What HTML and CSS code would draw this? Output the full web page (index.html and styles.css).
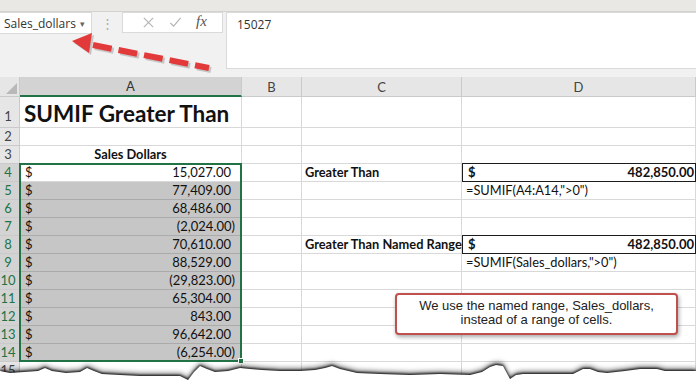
FILE: index.html
```html
<!DOCTYPE html>
<html>
<head>
  <link rel="stylesheet" href="styles.css">
</head>
<body>
  <!-- Ribbon edge and formula bar -->
  <div class="ribbon-edge"></div>
  <div class="formula-bar">
    <div class="name-box"><span>Sales_dollars</span><span class="caret">&#9662;</span></div>
    <div class="grip">&#8942;</div>
    <div class="fx-buttons">
      <svg class="fx-icon" viewBox="0 0 14 14"><path d="M2 2l10 10M12 2L2 12"/></svg>
      <svg class="fx-icon" viewBox="0 0 14 14"><path d="M1.5 7.5l3.5 3.5 7.5-9"/></svg>
      <span class="fx">fx</span>
    </div>
    <div class="formula-input">15027</div>
  </div>

  <!-- Worksheet grid -->
  <div class="sheet">
    <div class="corner"><span class="corner-tri"></span></div>
    <div class="col-head selected">A</div>
    <div class="col-head">B</div>
    <div class="col-head">C</div>
    <div class="col-head">D</div>

    <div class="row-head tall">1</div>
    <div class="cell title">SUMIF Greater Than</div>
    <div class="cell"></div><div class="cell"></div><div class="cell"></div>

    <div class="row-head">2</div>
    <div class="cell"></div><div class="cell"></div><div class="cell"></div><div class="cell"></div>

    <div class="row-head">3</div>
    <div class="cell bold center">Sales Dollars</div>
    <div class="cell"></div><div class="cell"></div><div class="cell"></div>

    <div class="row-head sel">4</div>
    <div class="cell money active"><span>$</span><span class="pos">15,027.00</span></div>
    <div class="cell"></div>
    <div class="cell bold">Greater Than</div>
    <div class="cell money boxed bold"><span>$</span><span class="total">482,850.00</span></div>

    <div class="row-head sel">5</div>
    <div class="cell money in-sel"><span>$</span><span class="pos">77,409.00</span></div>
    <div class="cell"></div><div class="cell"></div>
    <div class="cell formula">=SUMIF(A4:A14,"&gt;0")</div>

    <div class="row-head sel">6</div>
    <div class="cell money in-sel"><span>$</span><span class="pos">68,486.00</span></div>
    <div class="cell"></div><div class="cell"></div><div class="cell"></div>

    <div class="row-head sel">7</div>
    <div class="cell money in-sel"><span>$</span><span class="neg">(2,024.00)</span></div>
    <div class="cell"></div><div class="cell"></div><div class="cell"></div>

    <div class="row-head sel">8</div>
    <div class="cell money in-sel"><span>$</span><span class="pos">70,610.00</span></div>
    <div class="cell"></div>
    <div class="cell bold">Greater Than Named Range</div>
    <div class="cell money boxed bold"><span>$</span><span class="total">482,850.00</span></div>

    <div class="row-head sel">9</div>
    <div class="cell money in-sel"><span>$</span><span class="pos">88,529.00</span></div>
    <div class="cell"></div><div class="cell"></div>
    <div class="cell formula">=SUMIF(Sales_dollars,"&gt;0")</div>

    <div class="row-head sel">10</div>
    <div class="cell money in-sel"><span>$</span><span class="neg">(29,823.00)</span></div>
    <div class="cell"></div><div class="cell"></div><div class="cell"></div>

    <div class="row-head sel">11</div>
    <div class="cell money in-sel"><span>$</span><span class="pos">65,304.00</span></div>
    <div class="cell"></div><div class="cell"></div><div class="cell"></div>

    <div class="row-head sel">12</div>
    <div class="cell money in-sel"><span>$</span><span class="pos">843.00</span></div>
    <div class="cell"></div><div class="cell"></div><div class="cell"></div>

    <div class="row-head sel">13</div>
    <div class="cell money in-sel"><span>$</span><span class="pos">96,642.00</span></div>
    <div class="cell"></div><div class="cell"></div><div class="cell"></div>

    <div class="row-head sel">14</div>
    <div class="cell money in-sel"><span>$</span><span class="neg">(6,254.00)</span></div>
    <div class="cell"></div><div class="cell"></div><div class="cell"></div>

    <div class="row-head">15</div>
    <div class="cell"></div><div class="cell"></div><div class="cell"></div><div class="cell"></div>

    <!-- Selection outline over A4:A14 -->
    <div class="selection"><span class="handle"></span></div>
  </div>

  <!-- Overlays: arrow, callout, torn edge -->
  <svg class="arrow" viewBox="0 0 240 90" width="240" height="90">
    <g class="arrow-shadow">
      <path class="dash" d="M95 47 L211 70"/>
      <path class="head" d="M74 43 L94 35 L91 55 Z"/>
    </g>
    <path class="dash" d="M93 45 L209 68"/>
    <path class="head" d="M72 41 L92 33 L89 53 Z"/>
  </svg>

  <div class="callout">We use the named range, Sales_dollars,<br>instead of a range of cells.</div>

  <svg class="torn" viewBox="0 0 696 30" width="696" height="30" preserveAspectRatio="none">
    <path d="M0 9 L10 11 L24 10 L38 9 L45 6 L52 9 L66 11 L80 10 L87 6 L94 9 L102 12 L120 13 L140 14 L160 14 L180 14 L188 18 L194 10 L200 4 L207 7 L215 10 L228 9 L240 6 L250 7 L262 8 L280 9 L300 9 L315 8 L325 6 L332 4 L340 7 L357 11 L380 12 L410 13 L440 12 L470 13 L482 10 L490 5 L496 3 L503 4 L510 17 L516 13 L523 12 L545 12 L573 12 L583 7 L590 7 L598 10 L607 11 L625 9 L640 7 L657 7 L665 9 L673 9 L696 9 L696 30 L0 30 Z"/>
  </svg>
</body>
</html>
```

FILE: styles.css
```css
* { box-sizing: border-box; }
html, body {
  width: 696px;
  height: 392px;
  overflow: hidden;
}
body {
  margin: 0;
  position: relative;
  background: #f1f1f1;
  font-family: Lato, "Liberation Sans", sans-serif;
  color: #111;
}

/* Top strip of the ribbon */
.ribbon-edge {
  height: 12px;
  background: #e9e8e4;
  border-bottom: 1px solid #d2d2d0;
}

/* Formula bar */
.formula-bar {
  display: flex;
  align-items: flex-start;
  height: 65px; /* 12px -> 77px */
}
.name-box {
  width: 92px;
  height: 22px;
  background: #fff;
  border: 1px solid #dadada;
  border-left: none;
  display: flex;
  align-items: center;
  justify-content: space-between;
  padding: 0 6px 0 4px;
  font-family: "Open Sans", sans-serif;
  font-size: 12px;
  color: #333;
}
.caret {
  font-size: 9px;
  color: #666;
}
.grip {
  width: 30px;
  height: 22px;
  display: flex;
  align-items: center;
  justify-content: center;
  color: #aaa;
  font-size: 13px;
}
.fx-buttons {
  width: 101px;
  height: 21px;
  background: #fff;
  border: 1px solid #dadada;
  display: flex;
  align-items: center;
  justify-content: space-around;
  padding: 0 8px 0 12px;
}
.fx-icon {
  width: 13px;
  height: 13px;
  fill: none;
  stroke: #b5b5b5;
  stroke-width: 1.3;
}
.fx {
  font-family: "Liberation Serif", serif;
  font-style: italic;
  font-size: 15px;
  color: #555;
  margin-top: -2px;
}
.formula-input {
  flex: 1;
  margin-left: 3px;
  height: 57px;
  background: #fff;
  border: 1px solid #dadada;
  border-right: none;
  padding: 3px 10px;
  font-family: "Open Sans", sans-serif;
  font-size: 12px;
  color: #333;
}

/* Worksheet */
.sheet {
  position: relative;
  display: grid;
  grid-template-columns: 20px 222px 60px 160px 234px;
  grid-template-rows: 20px 31px repeat(14, 18px);
  background: #fff;
  font-size: 12.8px;
}
.corner,
.col-head,
.row-head {
  background: #e6e6e6;
  color: #444;
  border-right: 1px solid #cacaca;
  border-bottom: 1px solid #cacaca;
}
.corner {
  position: relative;
}
.corner-tri {
  position: absolute;
  right: 2px;
  bottom: 2px;
  width: 0;
  height: 0;
  border-left: 11px solid transparent;
  border-bottom: 11px solid #b8b8b8;
}
.col-head {
  display: flex;
  align-items: center;
  justify-content: center;
  font-size: 13px;
}
.col-head.selected {
  background: #d3d3d3;
  border-bottom: 2px solid #217346;
  color: #333;
}
.row-head {
  display: flex;
  align-items: flex-end;
  justify-content: center;
  padding: 0 3px 1px 0;
  font-size: 13px;
}
.row-head.tall {
  padding-bottom: 3px;
}
.row-head.sel {
  background: #d3d3d3;
  color: #217346;
}
.cell {
  border-right: 1px solid #d9d9d9;
  border-bottom: 1px solid #d9d9d9;
  display: flex;
  align-items: flex-end;
  padding: 0 3px 1px;
  white-space: nowrap;
  overflow: visible;
}
.title {
  font-size: 22.5px;
  font-weight: bold;
  padding-left: 4px;
  padding-bottom: 0;
}
.bold { font-weight: bold; }
.center { justify-content: center; }
.money {
  justify-content: space-between;
  padding-left: 5px;
  font-size: 13px;
}
.money .pos { padding-right: 7px; }
.money .neg { padding-right: 3px; }
.money .total { padding-right: 0; margin-right: -2px; }
.in-sel {
  background: #c6c6c6;
  border-bottom-color: #ababab;
}
.active {
  background: #fff;
}
.boxed {
  border: 1px solid #1c1c1c;
  margin-top: -1px;
  padding-left: 5px;
}
.formula {
  padding-left: 4px;
}
.selection {
  position: absolute;
  grid-column: 2 / 3;
  grid-row: 5 / 16;
  top: -1px;
  left: -1px;
  right: 0;
  bottom: 0;
  border: 2px solid #217346;
  pointer-events: none;
}
.handle {
  position: absolute;
  right: -4px;
  bottom: -4px;
  width: 6px;
  height: 6px;
  background: #217346;
  border: 1px solid #fff;
}

/* Red dashed arrow pointing at the name box */
.arrow {
  position: absolute;
  left: 0;
  top: 0;
}
.arrow .dash {
  fill: none;
  stroke: #e23a3a;
  stroke-width: 6;
  stroke-dasharray: 19 7;
}
.arrow .head {
  fill: #e23a3a;
}
.arrow-shadow .dash { stroke: rgba(0, 0, 0, 0.18); }
.arrow-shadow .head { fill: rgba(0, 0, 0, 0.18); }

/* Callout box */
.callout {
  position: absolute;
  left: 395px;
  top: 293px;
  width: 283px;
  height: 42px;
  background: #fff;
  border: 2px solid #c0504d;
  border-radius: 4px;
  box-shadow: 1px 2px 4px rgba(0, 0, 0, 0.35);
  font-family: "Liberation Sans", Arial, sans-serif;
  font-size: 13px;
  line-height: 14px;
  text-align: center;
  padding-top: 4px;
  color: #222;
}

/* Torn paper edge at the bottom */
.torn {
  position: absolute;
  left: 0;
  bottom: 0;
  fill: #fff;
  filter: drop-shadow(0 -1px 1px rgba(0, 0, 0, 0.9)) drop-shadow(0 -2px 2px rgba(0, 0, 0, 0.5));
}
```
